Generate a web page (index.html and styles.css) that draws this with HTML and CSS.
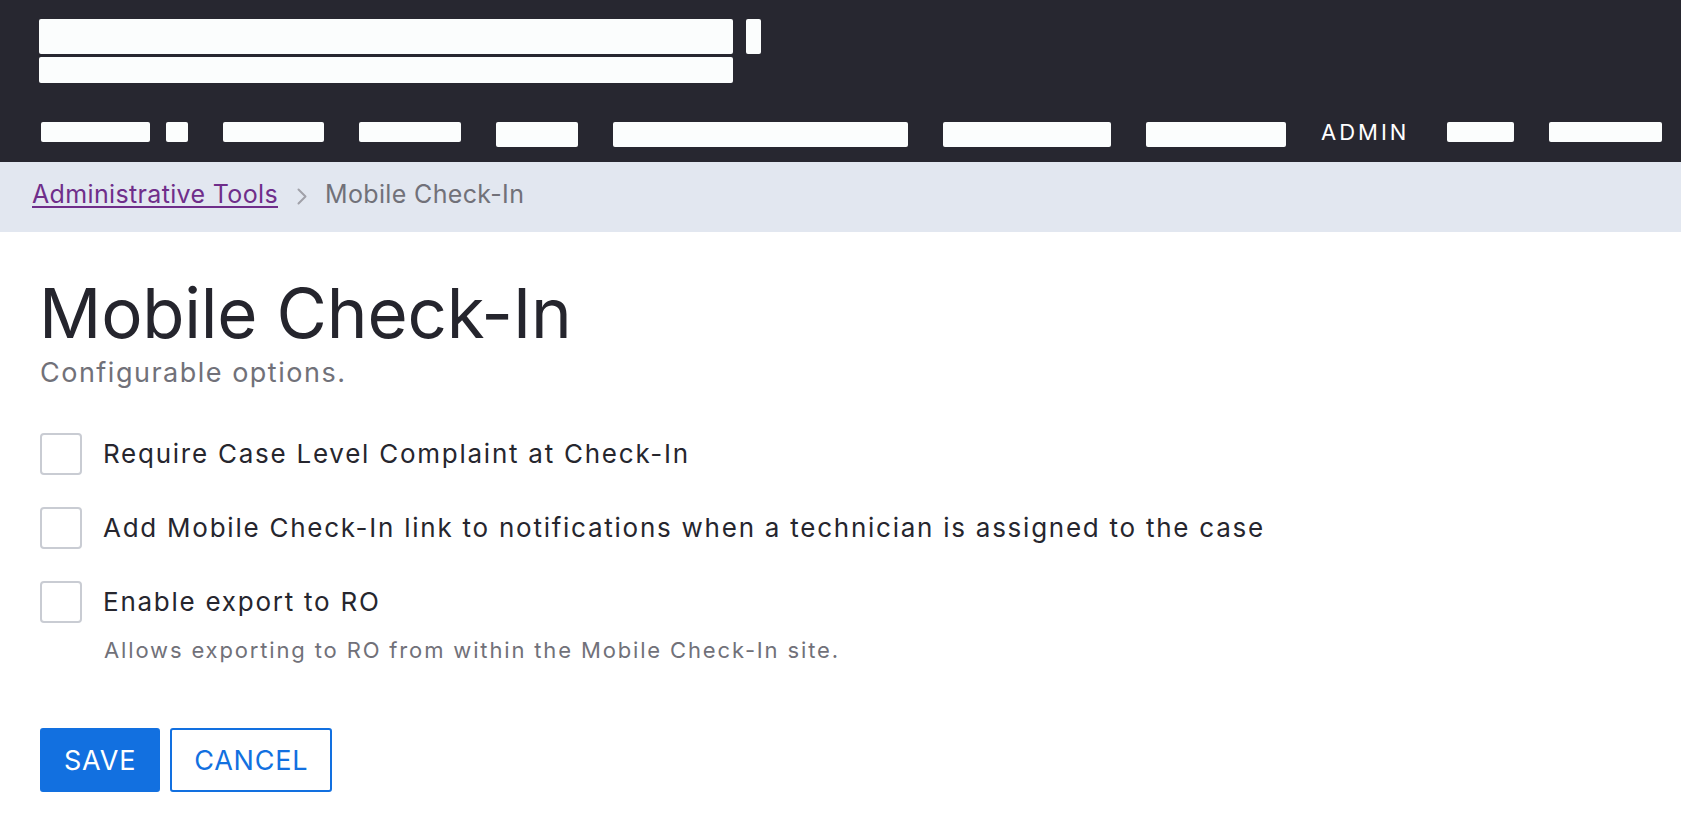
FILE: index.html
```html
<!DOCTYPE html>
<html lang="en">
<head>
<meta charset="utf-8">
<title>Mobile Check-In</title>
<link rel="stylesheet" href="styles.css">
</head>
<body>
<header class="site-header">
  <div class="brand">
    <div class="brand-row">
      <span class="redact r-title"></span>
      <span class="redact r-tick"></span>
    </div>
    <div class="brand-row">
      <span class="redact r-sub"></span>
    </div>
  </div>
  <nav class="main-nav">
    <div class="nav-item nav-pair">
      <span class="redact n1"></span>
      <span class="redact n2"></span>
    </div>
    <div class="nav-item"><span class="redact n3"></span></div>
    <div class="nav-item"><span class="redact n4"></span></div>
    <div class="nav-item"><span class="redact tall n5"></span></div>
    <div class="nav-item"><span class="redact tall n6"></span></div>
    <div class="nav-item"><span class="redact tall n7"></span></div>
    <div class="nav-item"><span class="redact tall n8"></span></div>
    <a class="nav-item nav-text" href="#">ADMIN</a>
    <div class="nav-item"><span class="redact n9"></span></div>
    <div class="nav-item"><span class="redact n10"></span></div>
  </nav>
</header>

<div class="breadcrumb">
  <a class="crumb-link" href="#">Administrative Tools</a>
  <svg class="crumb-sep" width="12" height="17" viewBox="0 0 12 17" aria-hidden="true">
    <path d="M2.5 1.5 L9.5 8.5 L2.5 15.5" fill="none" stroke="#a1a1a9" stroke-width="2" stroke-linecap="round" stroke-linejoin="round"/>
  </svg>
  <span class="crumb-current">Mobile Check-In</span>
</div>

<main class="content">
  <h1 class="page-title">Mobile Check-In</h1>
  <p class="page-subtitle">Configurable options.</p>

  <form class="options">
    <label class="option">
      <input type="checkbox" class="option-box">
      <span class="option-label">Require Case Level Complaint at Check-In</span>
    </label>
    <label class="option">
      <input type="checkbox" class="option-box">
      <span class="option-label">Add Mobile Check-In link to notifications when a technician is assigned to the case</span>
    </label>
    <div class="option-group">
      <label class="option">
        <input type="checkbox" class="option-box">
        <span class="option-label">Enable export to RO</span>
      </label>
      <p class="option-help">Allows exporting to RO from within the Mobile Check-In site.</p>
    </div>

    <div class="actions">
      <button type="button" class="btn btn-primary">SAVE</button>
      <button type="button" class="btn btn-outline">CANCEL</button>
    </div>
  </form>
</main>
</body>
</html>
```

FILE: styles.css
```css
* { box-sizing: border-box; }

html, body {
  margin: 0;
  padding: 0;
  background: #ffffff;
}

body {
  font-family: "Inter", "Liberation Sans", sans-serif;
  color: #26262e;
}

/* ---------- header ---------- */
.site-header {
  background: #272730;
  height: 162px;
  padding: 19px 0 0 39px;
}

.brand {
  display: flex;
  flex-direction: column;
  gap: 3px;
}

.brand-row {
  display: flex;
  gap: 13px;
}

.redact {
  display: block;
  background: #fbfdfd;
  border-radius: 2px;
}

.r-title { width: 694px; height: 35px; }
.r-tick  { width: 15px;  height: 35px; }
.r-sub   { width: 694px; height: 26px; }

.main-nav {
  display: flex;
  align-items: flex-start;
  gap: 35px;
  margin-top: 39px;
  padding-left: 2px;
}

.nav-item {
  display: flex;
}

.nav-pair { gap: 16px; }

.redact.n1, .redact.n2, .redact.n3, .redact.n4, .redact.n9, .redact.n10 { height: 20px; }
.redact.tall { height: 25px; }

.n1  { width: 109px; }
.n2  { width: 22px; }
.n3  { width: 101px; }
.n4  { width: 102px; }
.n5  { width: 82px; }
.n6  { width: 295px; }
.n7  { width: 168px; }
.n8  { width: 140px; }
.n9  { width: 67px; }
.n10 { width: 113px; }

.nav-text {
  color: #ffffff;
  text-decoration: none;
  font-size: 22px;
  line-height: 20px;
  letter-spacing: 3px;
  padding-right: 3px;
}

/* ---------- breadcrumb ---------- */
.breadcrumb {
  background: #e2e7f0;
  height: 70px;
  display: flex;
  align-items: center;
  padding: 0 0 6px 32px;
  font-size: 25px;
  letter-spacing: 0.35px;
}

.crumb-link {
  color: #6f2e8a;
  text-decoration: underline;
  text-decoration-thickness: 2px;
  text-underline-offset: 3px;
}

.crumb-sep {
  margin: 4px 17px 0 18px;
  flex: none;
}

.crumb-current {
  color: #717179;
}

/* ---------- content ---------- */
.content {
  padding: 41px 40px 40px 39px;
}

.page-title {
  margin: 0;
  font-size: 69px;
  line-height: 80px;
  font-weight: 400;
  color: #25252d;
  letter-spacing: -0.2px;
}

.page-subtitle {
  margin: 5px 0 0 1px;
  font-size: 27px;
  line-height: 30px;
  color: #717179;
  letter-spacing: 1.5px;
}

.options {
  margin: 45px 0 0 1px;
  display: flex;
  flex-direction: column;
  gap: 32px;
}

.option {
  display: flex;
  align-items: center;
  gap: 21px;
  cursor: pointer;
}

.option-box {
  appearance: none;
  -webkit-appearance: none;
  margin: 0;
  width: 42px;
  height: 42px;
  border: 2px solid #c9ccd3;
  border-radius: 4px;
  background: #ffffff;
  flex: none;
}

.option-label {
  font-size: 26px;
  line-height: 30px;
  color: #26262e;
  letter-spacing: 1.75px;
}

.option-help {
  margin: 14px 0 0 64px;
  font-size: 22px;
  line-height: 26px;
  color: #717179;
  letter-spacing: 1.85px;
}

.actions {
  margin-top: 33px;
  display: flex;
  gap: 10px;
}

.btn {
  height: 64px;
  padding: 0 22px;
  font-family: inherit;
  font-size: 27px;
  letter-spacing: 0.8px;
  border-radius: 3px;
  cursor: pointer;
}

.btn-primary {
  background: #1270e0;
  color: #ffffff;
  border: 2px solid #1270e0;
}

.btn-outline {
  background: #ffffff;
  color: #1270e0;
  border: 2px solid #1270e0;
}
```
